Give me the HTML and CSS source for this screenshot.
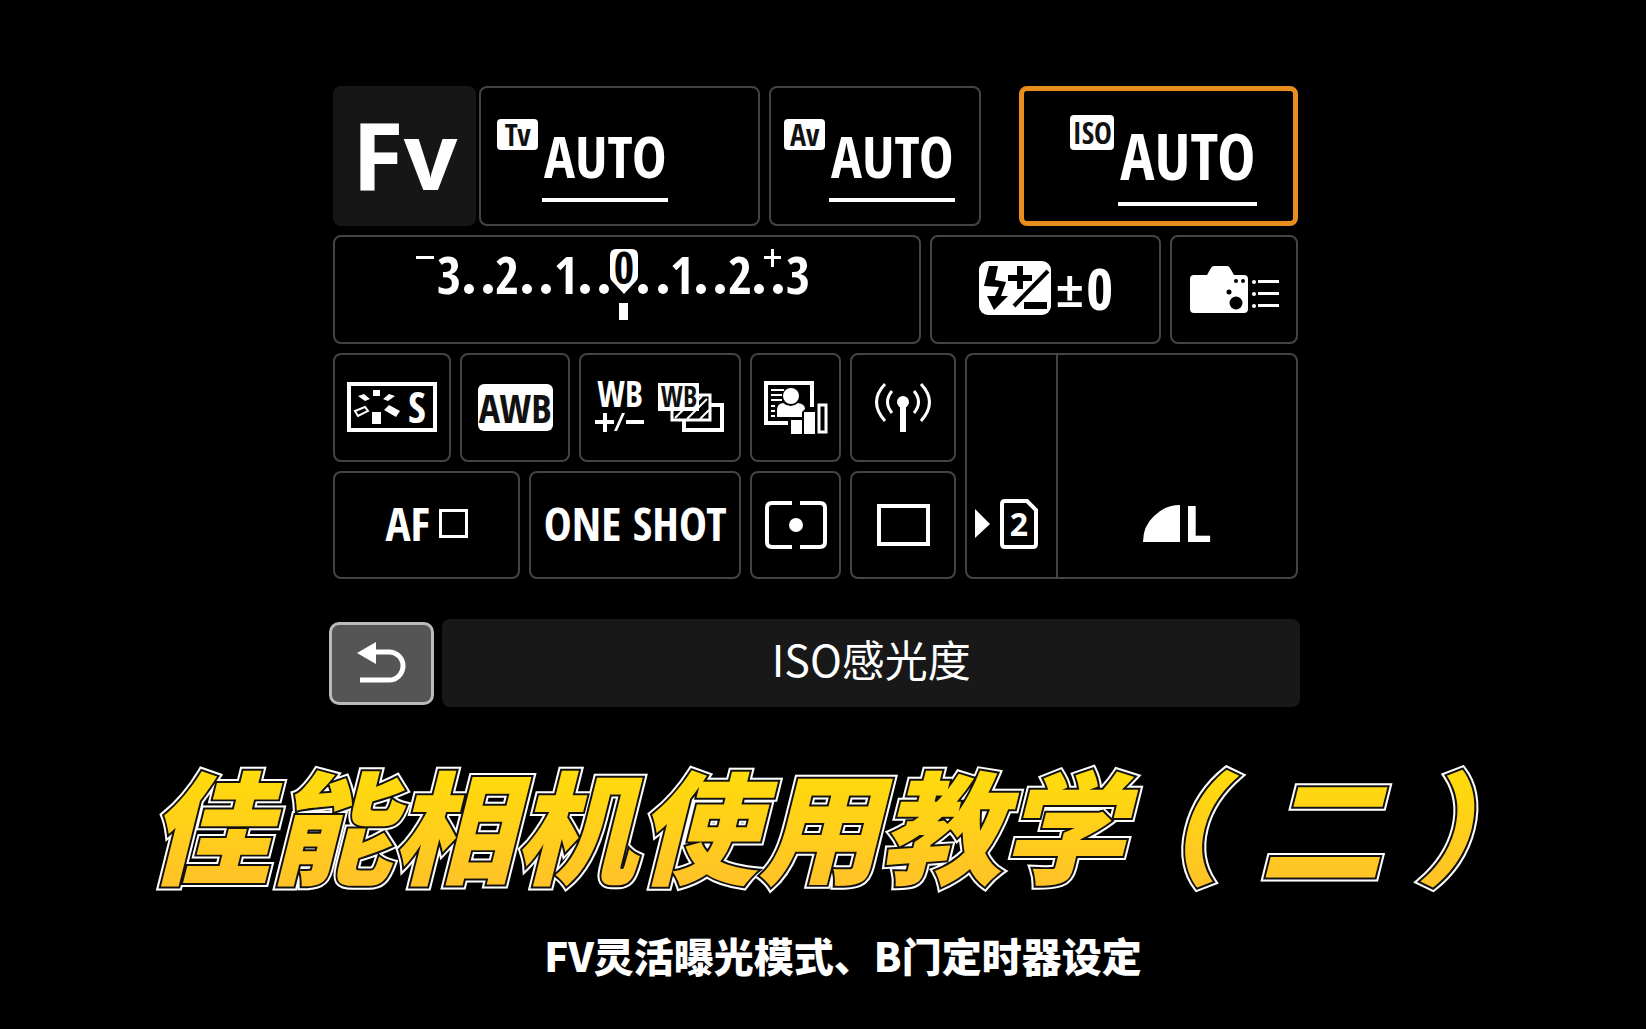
FILE: index.html
```
<!DOCTYPE html>
<html lang="zh-CN">
<head>
<meta charset="utf-8">
<meta name="viewport" content="width=device-width, initial-scale=1">
<title>佳能相机使用教学（二）</title>
<link rel="stylesheet" href="styles.css">
</head>
<body>
<main class="cover">
  <section class="panel" aria-label="Quick control">
    <div class="row row-top">
      <div class="mode">Fv</div>
      <button class="tile setting tv"><span class="badge">Tv</span><span class="value">AUTO</span></button>
      <button class="tile setting av"><span class="badge">Av</span><span class="value">AUTO</span></button>
      <button class="tile setting iso selected"><span class="badge">ISO</span><span class="value">AUTO</span></button>
    </div>

    <div class="row row-exposure">
      <button class="tile scale" aria-label="Exposure compensation">
        <svg width="392" height="72" viewBox="0 0 392 72" fill="#fff">
          <path d="M0 7h18v3H0zM348 7h7V0h3v7h7v3h-7v8h-3v-8h-7z"/>
          <path d="M200 0h16q6 0 6 7v20q0 3-2 5l-12 13-12-13q-2-2-2-5V7q0-7 6-7z"/>
          <g class="scale-digits">
            <text x="33" y="45">3</text><text x="91" y="45">2</text><text x="150" y="45">1</text>
            <text class="zero" x="208" y="35">0</text>
            <text x="266" y="45">1</text><text x="324" y="45">2</text><text x="382" y="45">3</text>
          </g>
          <g>
            <circle cx="53" cy="40" r="5"/><circle cx="72" cy="40" r="5"/>
            <circle cx="111" cy="40" r="5"/><circle cx="130" cy="40" r="5"/>
            <circle cx="169" cy="40" r="5"/><circle cx="188" cy="40" r="5"/>
            <circle cx="227" cy="40" r="5"/><circle cx="247" cy="40" r="5"/>
            <circle cx="285" cy="40" r="5"/><circle cx="304" cy="40" r="5"/>
            <circle cx="343" cy="40" r="5"/><circle cx="362" cy="40" r="5"/>
          </g>
          <path d="M203 54h9v17h-9z"/>
        </svg>
      </button>
      <button class="tile flash" aria-label="Flash exposure compensation">
        <svg width="72" height="54" viewBox="0 0 72 54">
          <rect width="72" height="54" rx="9" fill="#fff"/>
          <path d="M10 5h9l-3 14 11 2-5 14h7L15 49 8 35h8l4-9-15-1z"/>
          <path d="M38 5h6v9h9v6h-9v8h-6v-8h-9v-6h9zM45 41h23v7H45z"/>
          <path d="M35 45 69 10" stroke="#000" stroke-width="4"/>
        </svg>
        <span class="amount"><span class="sign">±</span>0</span>
      </button>
      <button class="tile custom" aria-label="Custom controls">
        <svg width="89" height="48" viewBox="0 0 89 48" fill="#fff">
          <path d="M4 9h13l4-7q1-2 3-2h13q2 0 3 2l4 7h10q4 0 4 4v30q0 4-4 4H4q-4 0-4-4V13q0-4 4-4z"/>
          <g fill="#000"><circle cx="46" cy="15" r="2"/><circle cx="53" cy="15" r="2"/><circle cx="39" cy="26" r="2.500"/><circle cx="46" cy="37" r="6.500"/></g>
          <g><circle cx="64" cy="16" r="2"/><circle cx="64" cy="28" r="2"/><circle cx="64" cy="40" r="2"/>
          <path d="M68 14h21v3H68zM68 26h21v3H68zM68 38h21v3H68z"/></g>
        </svg>
      </button>
    </div>

    <div class="row row-bottom">
      <div class="left">
        <div class="row row-image">
          <button class="tile" aria-label="Picture style">
            <svg width="90" height="50" viewBox="0 0 90 50" fill="#fff">
              <rect x="2" y="2" width="86" height="46" fill="none" stroke="#fff" stroke-width="4"/>
              <path d="M26 8h7v6h-7zM25 30h9v12h-9zM11 14l6-2 6 5-5 2zM48 14l-6-2-6 5 5 2zM37 28l5-5 11 6-4 6z"/>
              <path d="M8 29l10-4 3 4-10 5z" fill="none" stroke="#fff" stroke-width="2"/>
              <text class="style-letter" x="70" y="41">S</text>
            </svg>
          </button>
          <button class="tile"><span class="awb-label">AWB</span></button>
          <button class="tile" aria-label="White balance shift and bracketing">
            <svg width="130" height="50" viewBox="0 0 130 50" fill="#fff">
              <text class="wb-text" x="25" y="25">WB</text>
              <path d="M0 38h8v-7h4v7h7v4h-7v8H8v-8H0zM19 49l8-18h3l-8 18zM31 38h18v4H31z"/>
              <g fill="#000" stroke="#fff" stroke-width="4">
                <path d="M89 23h38v25H89z"/>
                <path d="M77 13h38v25H77z" stroke-width="3"/>
                <path d="M80 36l14-14M92 37l20-20M105 37l9-9M100 22l7-8" stroke-width="2"/>
              </g>
              <path d="M63 1h41v28H63z"/>
              <text class="wb-inverse" x="84" y="25">WB</text>
            </svg>
          </button>
          <button class="tile" aria-label="Auto lighting optimizer">
            <svg width="64" height="53" viewBox="0 0 64 53" fill="#fff">
              <path d="M24 42H2V2h46v24" fill="none" stroke="#fff" stroke-width="4"/>
              <path d="M7 8h13v2H7zM7 13h11v2H7zM7 18h11v2H7zM7 24h4v2H7zM7 29h4v2H7zM7 34h4v2H7z"/>
              <circle cx="27" cy="15" r="8"/>
              <path d="M13 36V29q0-6 6-7 8 6 15 0 7 1 7 6l-3 3v5z"/>
              <path d="M27 39h11v14H27zM40 31h11v22H40z"/>
              <path d="M55 24h7v27h-7z" fill="none" stroke="#fff" stroke-width="3"/>
            </svg>
          </button>
          <button class="tile" aria-label="Wireless">
            <svg width="58" height="50" viewBox="0 0 58 50" fill="none" stroke="#fff" stroke-width="4">
              <circle cx="29" cy="20" r="6" fill="#fff" stroke="none"/>
              <path d="M29 20v30" stroke-width="6"/>
              <path d="M18 9q-9 11 0 22M40 9q9 11 0 22M11 2q-17 18 0 37M47 2q17 18 0 37" stroke-width="3"/>
            </svg>
          </button>
        </div>
        <div class="row row-drive">
          <button class="tile af"><span>AF</span><i class="af-frame"></i></button>
          <button class="tile oneshot">ONE SHOT</button>
          <button class="tile" aria-label="Metering mode">
            <svg width="62" height="48" viewBox="0 0 62 48" fill="none" stroke="#fff" stroke-width="4">
              <path d="M27 2H7Q2 2 2 7v34q0 5 5 5h20M35 2h20q5 0 5 5v34q0 5-5 5H35"/>
              <circle cx="31" cy="24" r="7" fill="#fff" stroke="none"/>
            </svg>
          </button>
          <button class="tile" aria-label="Single shooting"><i class="drive-frame"></i></button>
        </div>
      </div>
      <div class="tile storage">
        <button class="card" aria-label="Card 2">
          <svg width="64" height="50" viewBox="0 0 64 50" fill="#fff">
            <path d="M0 10l15 15L0 39z"/>
            <path d="M30 2h22l9 9v34q0 3-3 3H30q-3 0-3-3V5q0-3 3-3z" fill="none" stroke="#fff" stroke-width="4"/>
            <text class="card-number" x="44" y="37">2</text>
          </svg>
        </button>
        <button class="quality" aria-label="Image quality">
          <svg width="37" height="37" viewBox="0 0 37 37"><path d="M37 0v37H0Q0 21 11 11 22 0 37 0z" fill="#fff"/></svg>
          <span>L</span>
        </button>
      </div>
    </div>

    <div class="footer">
      <button class="back" aria-label="Back">
        <svg width="50" height="42" viewBox="0 0 50 42">
          <path d="M18 10h14a14 14 0 0 1 0 28H3" fill="none" stroke="#fff" stroke-width="5"/>
          <path d="M0 11 19 0v22z" fill="#fff"/>
        </svg>
      </button>
      <div class="hint">ISO感光度</div>
    </div>
  </section>

  <h1 class="title">
    <svg viewBox="0 0 1350 150" role="img" aria-label="佳能相机使用教学（二）">
      <defs>
        <linearGradient id="gold" x1="0" y1="20" x2="0" y2="130" gradientUnits="userSpaceOnUse">
          <stop offset="0" stop-color="#ffdb0c"/><stop offset="1" stop-color="#ffc228"/>
        </linearGradient>
        <g id="title-text">
          <text y="120"><tspan x="0">佳能相机使用教学</tspan><tspan x="950">（</tspan><tspan x="1112">二</tspan><tspan x="1269">）</tspan></text>
        </g>
      </defs>
      <use href="#title-text" class="title-rim"/>
      <use href="#title-text" class="title-face"/>
    </svg>
  </h1>
  <p class="subtitle">FV灵活曝光模式、B门定时器设定</p>
</main>
</body>
</html>
```
FILE: styles.css
```
* { box-sizing: border-box; }

body {
  margin: 0;
  min-height: 100vh;
  background: #000;
  color: #fff;
  font-family: "Open Sans Condensed", "Noto Sans CJK SC", sans-serif;
  font-weight: 700;
}

button {
  margin: 0;
  padding: 0;
  border: 0;
  background: none;
  color: inherit;
  font: inherit;
}

svg { display: block; overflow: visible; }

.cover { padding-top: 86px; overflow: hidden; }

.panel {
  display: flex;
  flex-direction: column;
  gap: 9px;
  width: 59%;
  margin-left: 20%;
}

.row { display: grid; gap: 9px; }
.row-top, .row-exposure, .row-bottom { margin: 0 2px 0 4px; }
.row-top { grid-template-columns: 143fr 284fr 221fr 317fr; gap: 0; min-height: 140px; }
.row-exposure { grid-template-columns: 588fr 231fr 128fr; min-height: 109px; }
.row-bottom { grid-template-columns: 623fr 333fr; min-height: 226px; }
.left { display: grid; grid-template-rows: 1fr 1fr; gap: 9px; }
.row-image { grid-template-columns: 118fr 110fr 162fr 91fr 106fr; }
.row-drive { grid-template-columns: 187fr 212fr 91fr 106fr; }

.tile {
  display: flex;
  align-items: center;
  justify-content: center;
  min-width: 0;
  border: 2px solid #444;
  border-radius: 8px;
}

.mode {
  display: flex;
  align-items: center;
  justify-content: center;
  padding-bottom: 4px;
  border-radius: 8px;
  background: #161616;
  font: 700 94px/1 "Noto Sans", sans-serif;
}

.setting { align-items: flex-start; justify-content: flex-start; gap: 4px; }
.tv { margin-left: 3px; padding: 31px 0 0 16px; }
.av { margin-left: 9px; padding: 31px 0 0 13px; }
.iso { margin-left: 38px; padding: 24px 0 0 46px; }
.selected { border: 5px solid #e98d1d; }

.badge {
  width: 41px;
  border-radius: 4px;
  background: #fff;
  color: #111;
  font-size: 30px;
  line-height: 31px;
}
.iso .badge { width: 44px; line-height: 35px; }

.value {
  width: 126px;
  padding-bottom: 6px;
  border-bottom: 4px solid #fff;
  font-size: 58px;
  line-height: 73px;
}
.iso .value { width: 139px; font-size: 64px; line-height: 81px; }

.scale { align-items: flex-start; padding: 12px 30px 0 0; }
.scale-digits { font-size: 52px; text-anchor: middle; }
.scale-digits .zero { fill: #000; font-size: 44px; }
.flash { gap: 5px; padding-bottom: 3px; }
.amount { display: flex; align-items: center; gap: 2px; font-size: 58px; line-height: 54px; }
.sign { font: 600 50px/54px "Noto Sans", sans-serif; }

.style-letter { font-size: 43px; text-anchor: middle; }
.awb-label {
  width: 75px;
  border-radius: 6px;
  background: #fff;
  color: #111;
  font-size: 40px;
  line-height: 47px;
}
.wb-text { font-size: 35px; text-anchor: middle; }
.wb-inverse { font-size: 28px; text-anchor: middle; fill: #111; }

.af, .oneshot { padding-bottom: 3px; font-size: 47px; line-height: 60px; }
.af { gap: 9px; }
.af-frame { width: 29px; height: 29px; border: 3px solid #fff; }
.drive-frame { width: 53px; height: 42px; border: 4px solid #fff; }

.storage { display: grid; grid-template-columns: 92fr 241fr; align-items: stretch; }
.card, .quality { display: flex; align-items: flex-end; justify-content: center; }
.card { padding: 0 10px 28px 0; border-right: 2px solid #444; }
.card-number { font: 700 32px "Noto Sans", sans-serif; text-anchor: middle; }
.quality { gap: 4px; padding-bottom: 35px; font: 700 50px/37px "Noto Sans", sans-serif; }

.footer { display: grid; grid-template-columns: 105fr 858fr; align-items: center; gap: 8px; margin-top: 31px; }
.back {
  display: flex;
  align-items: center;
  justify-content: center;
  min-height: 83px;
  border: 3px solid #bbb;
  border-radius: 10px;
  background: #555;
}
.hint {
  padding-bottom: 10px;
  border-radius: 8px;
  background: #181818;
  font: 400 43px/78px "Noto Sans CJK SC", sans-serif;
  text-align: center;
}

.title { width: 82%; margin: 48px 0 0 9%; }
.title svg { width: 100%; font: italic 900 122px "Noto Sans CJK SC", sans-serif; }
.title-rim { fill: #fff; stroke: #fff; stroke-width: 8px; }
.title-face { fill: url(#gold); stroke: #111; stroke-width: 4px; paint-order: stroke; }

.subtitle {
  margin: 22px 0 0;
  padding-left: 40px;
  font: 900 40px/56px "Noto Sans CJK SC", sans-serif;
  text-align: center;
}
```
